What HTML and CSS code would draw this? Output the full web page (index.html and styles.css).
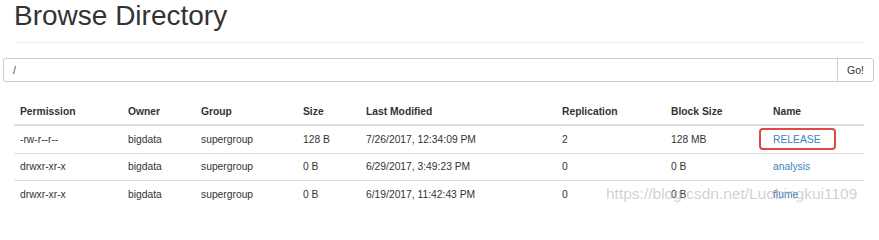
FILE: index.html
```html
<!DOCTYPE html>
<html>
<head>
<meta charset="utf-8">
<link rel="stylesheet" href="styles.css">
</head>
<body>
<div class="page">
  <h1 class="title">Browse Directory</h1>
  <hr class="rule">
  <div class="search">
    <div class="field">/</div>
    <div class="go">Go!</div>
  </div>
  <table class="listing">
    <colgroup>
      <col style="width:108px"><col style="width:73px"><col style="width:102px"><col style="width:63px">
      <col style="width:196px"><col style="width:109px"><col style="width:102px"><col style="width:97px">
    </colgroup>
    <thead>
      <tr><th>Permission</th><th>Owner</th><th>Group</th><th>Size</th><th>Last Modified</th><th>Replication</th><th>Block Size</th><th>Name</th></tr>
    </thead>
    <tbody>
      <tr><td>-rw-r--r--</td><td>bigdata</td><td>supergroup</td><td>128 B</td><td>7/26/2017, 12:34:09 PM</td><td>2</td><td>128 MB</td><td><span class="mark"><a class="link">RELEASE</a></span></td></tr>
      <tr><td>drwxr-xr-x</td><td>bigdata</td><td>supergroup</td><td>0 B</td><td>6/29/2017, 3:49:23 PM</td><td>0</td><td>0 B</td><td><a class="link">analysis</a></td></tr>
      <tr><td>drwxr-xr-x</td><td>bigdata</td><td>supergroup</td><td>0 B</td><td>6/19/2017, 11:42:43 PM</td><td>0</td><td>0 B</td><td><a class="link">flume</a></td></tr>
    </tbody>
  </table>
</div>
<div class="watermark">https://blog.csdn.net/Luobingkui1109</div>
</body>
</html>
```

FILE: styles.css
```css
html, body {
  margin: 0;
  padding: 0;
  background: #fff;
}
body {
  font-family: "Liberation Sans", Arial, sans-serif;
  color: #333;
  width: 879px;
  height: 211px;
  overflow: hidden;
  position: relative;
}
.page {
  padding: 0 15px 0 14px;
}
.title {
  margin: 0;
  font-size: 28px;
  line-height: 32px;
  font-weight: normal;
  color: #333;
}
.rule {
  margin: 10px 0 0 0;
  border: 0;
  border-top: 1px solid #eee;
  height: 0;
}
.search {
  display: flex;
  margin: 15px -10px 0 -11px;
  height: 24px;
  border: 1px solid #ccc;
  border-radius: 3px;
  box-sizing: border-box;
  font-size: 10.5px;
  line-height: 22px;
}
.field {
  flex: 1;
  padding-left: 9px;
  color: #444;
}
.go {
  width: 35px;
  border-left: 1px solid #ccc;
  text-align: center;
  color: #333;
}
.listing {
  margin-top: 16px;
  width: 850px;
  border-collapse: collapse;
  table-layout: fixed;
  font-size: 10.3px;
  line-height: 11.4px;
}
.listing th, .listing td {
  text-align: left;
  padding: 7.5px 6px;
  white-space: nowrap;
}
.listing th {
  font-weight: bold;
  border-bottom: 2px solid #ddd;
}
.listing td {
  border-top: 1px solid #ddd;
}
.link {
  color: #3b7fc0;
  text-decoration: none;
}
.mark {
  position: relative;
}
.mark::after {
  content: "";
  position: absolute;
  left: -14px;
  right: -15px;
  top: -6px;
  bottom: -5px;
  border: 2px solid #e04848;
  border-radius: 4px;
}
.watermark {
  position: absolute;
  left: 606px;
  top: 186px;
  font-size: 15.5px;
  line-height: 16px;
  color: rgba(170, 170, 170, 0.55);
  white-space: nowrap;
}
```
